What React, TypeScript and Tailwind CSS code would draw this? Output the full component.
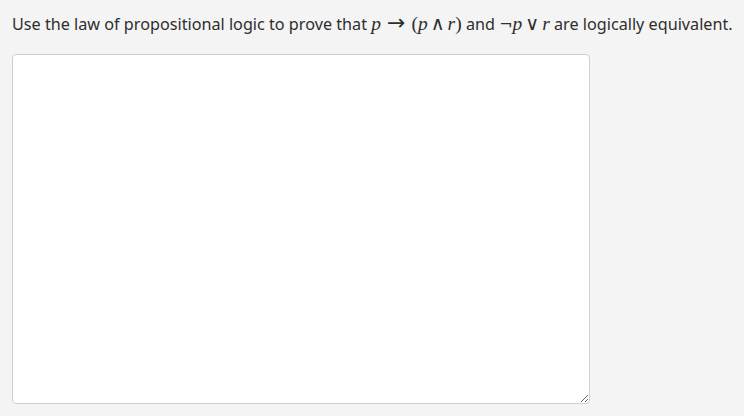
export default function App() {
  const m = "font-['Liberation_Serif',serif] italic text-[19.5px]";
  const op = "inline-block mx-[3px] font-['DejaVu_Sans',sans-serif] text-[19px] leading-none";
  const pr = "font-['Liberation_Serif',serif] text-[19.5px]";
  return (
    <div className="min-h-screen w-full bg-[#f4f4f4] px-3 pt-[12px] font-['Noto_Sans',sans-serif] text-[16.2px] text-[#2e2e2e]">
      <p className="leading-[24px] whitespace-nowrap">
        Use the law of propositional logic to prove that{" "}
        <span className={m}>p</span>
        <span className="mx-[6px] inline-block font-['DejaVu_Sans',sans-serif] text-[22px] leading-none">→</span>
        <span className={pr}>(</span>
        <span className={m}>p</span>
        <span className={op}>∧</span>
        <span className={m}>r</span>
        <span className={pr}>)</span> and{" "}
        <span className="inline-block font-['DejaVu_Sans',sans-serif] text-[16px] leading-none">¬</span>
        <span className={m}>p</span>
        <span className={op}>∨</span>
        <span className={m}>r</span> are logically equivalent.
      </p>
      <textarea className="mt-[18px] block h-[350px] w-[578px] rounded-[4px] border border-[#cfcfcf] bg-white p-2 outline-none" />
    </div>
  );
}
